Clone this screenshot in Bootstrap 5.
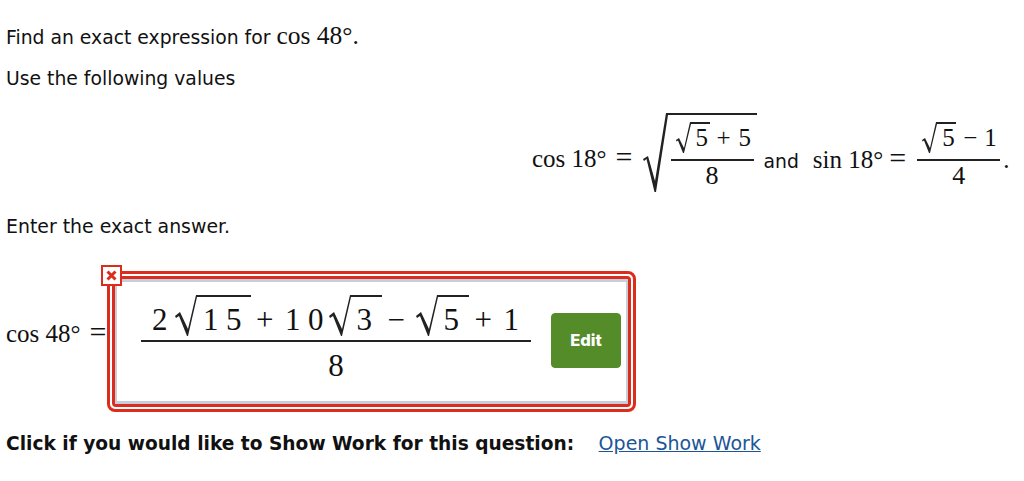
<!DOCTYPE html>
<html lang="en">
<head>
<meta charset="utf-8">
<title>Exact expression</title>
<link href="https://cdn.jsdelivr.net/npm/bootstrap@5.3.0/dist/css/bootstrap.min.css" rel="stylesheet">
<style>
html,body{height:481px;overflow:hidden;background:#fff}
body{font-family:"DejaVu Sans",Verdana,sans-serif;font-size:18.8px;line-height:24px;color:#111;padding:24px 0 0 6px}
.mth{font-family:"Liberation Serif","Times New Roman",serif;color:#111}
.ln1{height:24px;margin:0 0 19px;white-space:nowrap}
.ln1 .mth{font-size:25.5px}
.ln3{margin:0;height:24px;font-size:18.9px}
.dispf{height:92px;margin-top:22px;padding-left:526px;margin-bottom:9px;white-space:nowrap}
.dispf .mth{font-size:25px;line-height:28px}
.eq{font-size:30px;line-height:0}
.eq1{margin:0 10px 0 9px}
.eq2{margin:0 11px 0 6px}
.tx-cos{margin-top:31.6px}
.tx-and{margin:36.5px 14px 0 7px}
.tx-sin{margin-top:32.5px}
.tx-dot{margin:32.5px 0 0 3px}
.rad{display:flex;align-items:flex-start}
.rad svg{display:block;flex:none}
.rad-line{border-top:2px solid #222}
.outer-line{padding:7px 3px 0;height:79px}
.fr{display:flex;flex-direction:column;align-items:center}
.fr-sm .fr-num{display:flex;align-items:flex-start;height:39px;padding:0 5px;border-bottom:2px solid #222;width:83px;box-sizing:border-box}
.fr-sm .fr-num .op{padding-top:2.4px;margin-left:7px}
.fr-sm .fr-num .op2{padding-top:2.4px;margin-left:8px}
.fr-sm .fr-num .op3{padding-top:2.4px;margin-left:7px}
.fr-sm .rad-line{width:19px;height:30px;padding-left:5px}
.fr-den-sm{padding-top:1px;font-size:26px!important}
.tx-frac{margin-top:9px}
.ans-row{margin-top:33px;height:141px}
.ans-lab{font-size:25px;line-height:28px;width:101px;white-space:nowrap;color:#111;padding-bottom:16px}
.eq3{margin-left:9px}
.box-o{width:529px;height:141px;border:3px solid #db2c1e;border-radius:8px;padding:2px;background:#fff;position:relative}
.box-m{height:100%;border:3px solid #db2c1e;border-radius:4px}
.box-i{height:100%;border:2px solid #c6cedb;border-top-width:3px;border-bottom-width:3px;padding:0 5px 0 24px;background:#fff}
.x-btn{position:absolute;left:-9px;top:-9px;width:21px;height:21px;background:#fff;border:2px solid #db2c1e;display:flex;align-items:center;justify-content:center}
.big{font-size:31px;line-height:36px;color:#111;width:390px}
.big .fr-num{display:flex;align-items:flex-start;width:100%;height:47px;border-bottom:2px solid #222;box-sizing:border-box;white-space:nowrap}
.big .tk{padding-top:7.5px}
.big .rad-line{padding-top:5.5px;height:41px;box-sizing:border-box}
.big .fr-den{height:47px;padding-top:6.5px}
.dg{margin-right:7.5px}
.m-a{margin-left:11px}
.m-b{margin-left:7.5px}
.m-c{margin-left:5px}
.m-d{margin-left:11.5px}
.m-e{margin-left:6px}
.m-f{margin-left:11.5px}
.rb1{padding-left:6px;padding-right:9.5px}
.rb3{padding-left:5px;padding-right:10.5px}
.edit-btn{background:#548c2a;border:1px solid #548c2a;color:#fff;font-family:Inter,sans-serif;font-weight:800;font-size:16.5px;width:70px;height:55px;padding:0;border-radius:4px;margin-bottom:2px}
.work{margin:19px 0 0;font-weight:700;font-size:18.6px;white-space:nowrap}
.work a{font-weight:400;font-size:19px;color:#1c5597;margin-left:18px}
</style>
</head>
<body>
<p class="ln1">Find an exact expression for <span class="mth">cos 48°.</span></p>
<p class="ln1">Use the following values</p>
<div class="dispf d-flex align-items-start">
  <span class="mth tx-cos">cos 18°<span class="eq eq1">=</span></span>
  <div class="rad">
    <svg width="25" height="79" viewBox="0 0 25 79"><path d="M0 46L5 43L12 68L23 0H25V2L13 79H11.5L3.5 46L1 48Z" fill="#222"/></svg>
    <div class="rad-line outer-line mth">
      <div class="fr fr-sm">
        <div class="fr-num">
          <div class="rad"><svg width="15" height="31" viewBox="0 0 15 31"><path d="M0 18L3 16L8 26L14 0H15V2L8 31H7L2 18.5L.5 19.5Z" fill="#222"/></svg><span class="rad-line">5</span></div>
          <span class="op">+</span><span class="op2">5</span>
        </div>
        <div class="fr-den-sm mth">8</div>
      </div>
    </div>
  </div>
  <span class="tx-and">and</span>
  <span class="mth tx-sin">sin 18°<span class="eq eq2">=</span></span>
  <div class="fr fr-sm mth tx-frac">
    <div class="fr-num">
      <div class="rad"><svg width="15" height="31" viewBox="0 0 15 31"><path d="M0 18L3 16L8 26L14 0H15V2L8 31H7L2 18.5L.5 19.5Z" fill="#222"/></svg><span class="rad-line">5</span></div>
      <span class="op">−</span><span class="op3">1</span>
    </div>
    <div class="fr-den-sm mth">4</div>
  </div>
  <span class="mth tx-dot">.</span>
</div>
<p class="ln3">Enter the exact answer.</p>
<div class="ans-row d-flex align-items-center">
  <span class="ans-lab mth">cos 48°<span class="eq eq3">=</span></span>
  <div class="box-o">
    <button type="button" class="x-btn p-0" aria-label="Remove"><svg width="11" height="11" viewBox="0 0 11 11"><path d="M1.5 1.5L9.5 9.5M9.5 1.5L1.5 9.5" stroke="#db2c1e" stroke-width="3"/></svg></button>
    <div class="box-m">
      <div class="box-i d-flex align-items-center justify-content-between">
        <div class="big mth fr">
          <div class="fr-num">
            <span class="tk m-a">2</span>
            <div class="rad m-b"><svg width="22" height="41" viewBox="0 0 22 41"><path d="M0 21L5 17L13 34L21 0H22V2L13 41H12L4 21L1 23Z" fill="#222"/></svg><span class="rad-line rb1"><span class="dg">1</span><span>5</span></span></div>
            <span class="tk m-c">+</span>
            <span class="tk m-d"><span class="dg">1</span><span>0</span></span>
            <div class="rad m-e"><svg width="22" height="41" viewBox="0 0 22 41"><path d="M0 21L5 17L13 34L21 0H22V2L13 41H12L4 21L1 23Z" fill="#222"/></svg><span class="rad-line rb3">3</span></div>
            <span class="tk m-c">−</span>
            <div class="rad m-f"><svg width="22" height="41" viewBox="0 0 22 41"><path d="M0 21L5 17L13 34L21 0H22V2L13 41H12L4 21L1 23Z" fill="#222"/></svg><span class="rad-line rb3">5</span></div>
            <span class="tk m-c">+</span>
            <span class="tk m-d">1</span>
          </div>
          <div class="fr-den">8</div>
        </div>
        <button type="button" class="btn edit-btn">Edit</button>
      </div>
    </div>
  </div>
</div>
<p class="work">Click if you would like to Show Work for this question: <a href="#">Open Show Work</a></p>
</body>
</html>
